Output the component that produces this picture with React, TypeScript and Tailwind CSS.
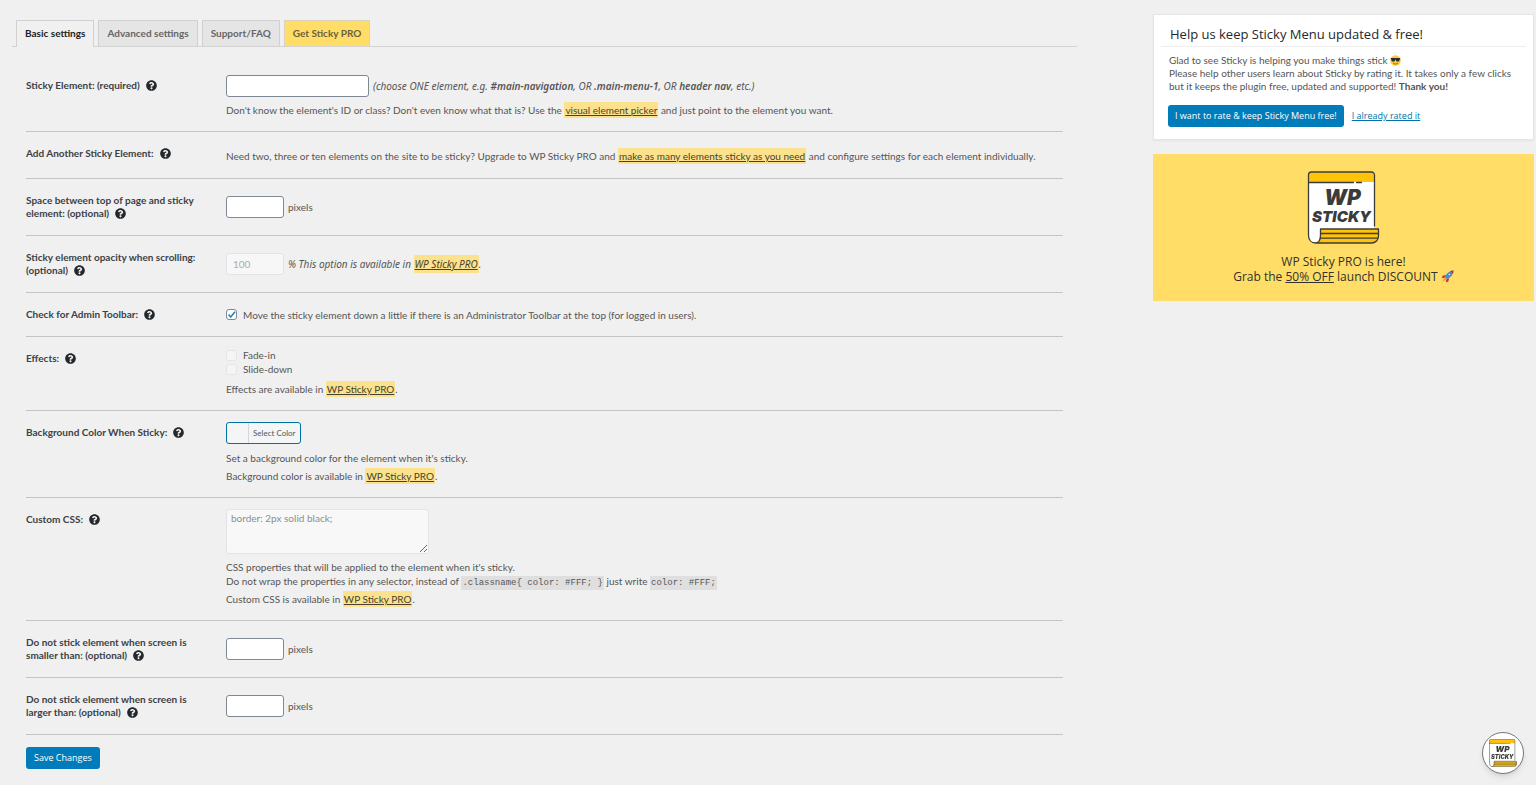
import { useState, type ReactNode } from 'react'
import { FaQuestionCircle } from 'react-icons/fa'

const TABS = ['Basic settings', 'Advanced settings', 'Support/FAQ', 'Get Sticky PRO']

const INPUT =
  'h-[22px] rounded-[3px] border border-[#7e8993] bg-white px-[6px] text-[10px] text-[#32373c] disabled:border-[#e2e4e7] disabled:bg-[#f7f7f7] disabled:text-[#a9adb1]'

function StickyLogo({ className }: { className: string }) {
  return (
    <svg viewBox="0 0 72 73" className={className} role="img" aria-label="WP Sticky">
      <path d="M1 4a3 3 0 0 1 3-3h60a3 3 0 0 1 3 3v54H14c0 8-2 13-7 13-4 0-6-3-6-7z" fill="#fff" />
      <path d="M1 11V4a3 3 0 0 1 3-3h60a3 3 0 0 1 3 3v7z" fill="#ffc40a" />
      <path d="M13 58h58v7c0 4-2 7-6 7H7c5-1 7-5 6-14z" fill="#ffc40a" />
      <path
        d="M67 55V4a3 3 0 0 0-3-3H4a3 3 0 0 0-3 3v60c0 5 3 8 7 8h56c4 0 7-3 7-7v-7H13v6c0 5-2 8-5 8M1 11.500h45M49 11.500h5M13 62.500h58M12.500 67.200h58"
        fill="none"
        stroke="#3b3b3b"
        strokeWidth="1.300"
        strokeLinecap="round"
        strokeLinejoin="round"
      />
      <text x="35" y="34" textAnchor="middle" fontSize="21" fontWeight="900" fontStyle="italic" fontFamily="Inter, sans-serif" fill="#3b3b3b">
        WP
      </text>
      <text x="34" y="51" textAnchor="middle" fontSize="15" fontWeight="900" fontStyle="italic" fontFamily="Inter, sans-serif" fill="#3b3b3b">
        STICKY
      </text>
    </svg>
  )
}

function CoolFace() {
  return (
    <svg viewBox="0 0 20 20" className="inline-block size-[11px] align-[-2px]" aria-hidden="true">
      <circle cx="10" cy="10" r="9.500" fill="#fcc83c" />
      <path d="M1.500 5.500h17v2l-1 .5c0 3-1.500 4-3.500 4s-3-1.500-3.500-3.500h-1C9 10.500 8 12 6 12s-3.500-1-3.500-4l-1-.5z" fill="#2b2b33" />
      <path d="M6 15c2.500 2 5.500 2 8 0" fill="none" stroke="#7b4a12" strokeWidth="1.300" strokeLinecap="round" />
    </svg>
  )
}

function Rocket() {
  return (
    <svg viewBox="0 0 24 24" className="inline-block size-[13px] align-[-2px]" aria-hidden="true">
      <path d="M9 9 3 10.500 1.500 15 8 14zM15 15l-1.500 6L9 22.500 10 16z" fill="#c0303c" />
      <path d="M23 1c-7 0-12 4-16 12l4 4C19 13 23 8 23 1z" fill="#4a8fc9" />
      <path d="M23 1c-2 0-4 .3-6 1l5 5c.7-2 1-4 1-6z" fill="#c0303c" />
      <circle cx="15.500" cy="8.500" r="2.300" fill="#dcecf7" stroke="#2a4d73" />
      <path d="M7 13 2 22l9-5z" fill="#f5a623" />
    </svg>
  )
}

function ProLink({ children = 'WP Sticky PRO' }: { children?: ReactNode }) {
  return (
    <a href="#pro" className="bg-[#fce28c] px-px py-[2px] text-[#46422f] underline">
      {children}
    </a>
  )
}

function Row({ label, htmlFor, children }: { label: string; htmlFor?: string; children: ReactNode }) {
  const Label = htmlFor ? 'label' : 'span'
  return (
    <div className="grid grid-cols-[200px_1fr] items-center border-b border-[#c3c4c5]">
      <div className="self-start py-[15px] pr-5 leading-[13px] font-bold text-[#3c4146]">
        <Label htmlFor={htmlFor}>{label}</Label>
        <FaQuestionCircle className="ml-[6px] inline-block size-[11px] align-[-2px] text-[#23282d]" />
      </div>
      <div className="py-[11px] leading-[14px]">{children}</div>
    </div>
  )
}

function Note({ children }: { children: ReactNode }) {
  return <em className="font-['Noto_Sans',sans-serif]">{children}</em>
}

function PixelsField({ id }: { id: string }) {
  return (
    <div className="flex items-center gap-1">
      <input id={id} type="text" className={`${INPUT} w-[58px]`} />
      <span>pixels</span>
    </div>
  )
}

function Checkbox({ id, label, checked, disabled, onChange }: {
  id: string
  label: string
  checked?: boolean
  disabled?: boolean
  onChange?: (value: boolean) => void
}) {
  return (
    <div className="flex items-center gap-[6px]">
      <span className="relative flex">
        <input
          id={id}
          type="checkbox"
          checked={checked ?? false}
          disabled={disabled}
          onChange={(e) => onChange?.(e.target.checked)}
          className="size-[11px] appearance-none rounded-[3px] border border-[#7e8993] bg-white disabled:border-[#e4e5e6] disabled:bg-[#f5f5f5]"
        />
        {checked && (
          <svg viewBox="0 0 11 11" className="pointer-events-none absolute inset-0 size-[11px]" aria-hidden="true">
            <path d="M2.500 5.500 4.700 8 9 2.700" fill="none" stroke="#1e8cbe" strokeWidth="1.700" />
          </svg>
        )}
      </span>
      <label htmlFor={id}>{label}</label>
    </div>
  )
}

function Code({ children }: { children: ReactNode }) {
  return (
    <code className="bg-[#dfdfdf] px-px py-[2px] font-['Liberation_Mono',monospace] text-[9px] leading-none">
      {children}
    </code>
  )
}

export default function App() {
  const [tab, setTab] = useState(TABS[0])
  const [toolbar, setToolbar] = useState(true)

  return (
    <div className="flex min-h-screen gap-[76px] bg-[#f0f0f0] pr-[2px] pl-3 font-['Lato',sans-serif] text-[10px] text-[#555]">
      <main className="min-w-0 flex-1 pt-5">
        <nav className="flex gap-1 border-b border-[#d3d3d3] pl-1">
          {TABS.map((name) => {
            let look = 'border-[#d0d0d0] bg-[#e5e5e5] text-[#666]'
            if (name === 'Get Sticky PRO') look = 'border-[#d9d3bd] bg-[#ffdd66] text-[#6b6140]'
            if (name === tab) look = '-mb-px border-[#d0d0d0] bg-[#f0f0f0] pb-px text-[#222]'
            return (
              <button
                key={name}
                type="button"
                onClick={() => setTab(name)}
                className={`border border-b-0 px-2 leading-[25px] font-bold ${look}`}
              >
                {name}
              </button>
            )
          })}
        </nav>

        <form className="pt-[17px] pr-[14px] pl-[14px]" onSubmit={(e) => e.preventDefault()}>
          <Row label="Sticky Element: (required)" htmlFor="element">
            <div className="flex items-center gap-1">
              <input id="element" type="text" className={`${INPUT} w-[143px]`} />
              <Note>
                (choose ONE element, e.g. <b className="font-semibold">#main-navigation</b>, OR{' '}
                <b className="font-semibold">.main-menu-1</b>, OR <b className="font-semibold">header nav</b>, etc.)
              </Note>
            </div>
            <p className="mt-[6px] pb-[3px]">
              Don't know the element's ID or class? Don't even know what that is? Use the{' '}
              <ProLink>visual element picker</ProLink> and just point to the element you want.
            </p>
          </Row>

          <Row label="Add Another Sticky Element:">
            <p className="pt-[6px] pb-1">
              Need two, three or ten elements on the site to be sticky? Upgrade to WP Sticky PRO and{' '}
              <ProLink>make as many elements sticky as you need</ProLink> and configure settings for each element
              individually.
            </p>
          </Row>

          <Row label="Space between top of page and sticky element: (optional)" htmlFor="space">
            <PixelsField id="space" />
          </Row>

          <Row label="Sticky element opacity when scrolling: (optional)" htmlFor="opacity">
            <div className="flex items-center gap-1">
              <input id="opacity" type="text" disabled defaultValue="100" className={`${INPUT} w-[58px]`} />
              <Note>
                % This option is available in <ProLink />.
              </Note>
            </div>
          </Row>

          <Row label="Check for Admin Toolbar:" htmlFor="toolbar">
            <Checkbox
              id="toolbar"
              label="Move the sticky element down a little if there is an Administrator Toolbar at the top (for logged in users)."
              checked={toolbar}
              onChange={setToolbar}
            />
          </Row>

          <Row label="Effects:" htmlFor="fade">
            <Checkbox id="fade" label="Fade-in" disabled />
            <Checkbox id="slide" label="Slide-down" disabled />
            <p className="mt-[6px] pb-[3px]">
              Effects are available in <ProLink />.
            </p>
          </Row>

          <Row label="Background Color When Sticky:" htmlFor="color">
            <button
              id="color"
              type="button"
              className="flex h-[22px] items-stretch rounded-[3px] border border-[#0071a1] bg-[#f3f5f6] text-[8px] leading-5"
            >
              <span className="w-[22px] border-r border-[#d5d7d9]" />
              <span className="px-1">Select Color</span>
            </button>
            <p className="mt-[7px]">Set a background color for the element when it's sticky.</p>
            <p className="mt-1 pb-[3px]">
              Background color is available in <ProLink />.
            </p>
          </Row>

          <Row label="Custom CSS:" htmlFor="css">
            <textarea
              id="css"
              disabled
              placeholder="border: 2px solid black;"
              className="block h-[45px] w-[203px] rounded-[3px] border border-[#e2e4e7] bg-[#f8f8f8] px-1 py-px text-[10px] placeholder:text-[#8a8d90]"
            />
            <p className="mt-[6px]">CSS properties that will be applied to the element when it's sticky.</p>
            <p>
              Do not wrap the properties in any selector, instead of{' '}
              <Code>
                .classname{'{'} color: #FFF; {'}'}
              </Code>{' '}
              just write <Code>color: #FFF;</Code>
            </p>
            <p className="mt-1 pb-[3px]">
              Custom CSS is available in <ProLink />.
            </p>
          </Row>

          <Row label="Do not stick element when screen is smaller than: (optional)" htmlFor="min">
            <PixelsField id="min" />
          </Row>

          <Row label="Do not stick element when screen is larger than: (optional)" htmlFor="max">
            <PixelsField id="max" />
          </Row>

          <button
            type="submit"
            className="mt-3 h-[22px] rounded-[3px] bg-[#007cba] px-2 font-['Open_Sans',sans-serif] text-[9px] font-medium text-white"
          >
            Save Changes
          </button>
        </form>
      </main>

      <aside className="w-[381px] shrink-0 pt-[14px]">
        <section className="border border-[#e5e5e5] bg-white px-[7px] pb-3 shadow-xs">
          <h2 className="border-b border-[#eee] px-[9px] pt-[10px] pb-[2px] font-['Open_Sans',sans-serif] text-[13px] leading-[19px] font-medium text-[#23282d]">
            Help us keep Sticky Menu updated &amp; free!
          </h2>
          <p className="px-2 pt-[7px] leading-[13px]">
            Glad to see Sticky is helping you make things stick <CoolFace />
            <br />
            Please help other users learn about Sticky by rating it. It takes only a few clicks but it keeps the plugin
            free, updated and supported! <span className="font-bold">Thank you!</span>
          </p>
          <div className="mt-3 flex items-center gap-2 pl-[7px] font-['Open_Sans',sans-serif] text-[9px]">
            <button type="button" className="h-[22px] rounded-[3px] bg-[#007cba] px-[7px] font-medium text-white">
              I want to rate &amp; keep Sticky Menu free!
            </button>
            <a href="#rated" className="text-[#0073aa] underline">
              I already rated it
            </a>
          </div>
        </section>

        <section className="mt-[14px] flex flex-col items-center bg-[#ffdd66] pt-[17px] pb-[17px] text-center font-['Open_Sans',sans-serif] text-[12px] leading-[15px] font-medium text-[#32322c]">
          <StickyLogo className="size-[73px]" />
          <p className="mt-[10px]">
            WP Sticky PRO is here!
            <br />
            Grab the <a href="#discount" className="underline">50% OFF</a> launch DISCOUNT <Rocket />
          </p>
        </section>
      </aside>

      <button
        type="button"
        className="fixed right-3 bottom-[11px] flex size-[42px] items-center justify-center rounded-full border border-[#777] bg-white shadow-md"
      >
        <StickyLogo className="size-[28px]" />
      </button>
    </div>
  )
}
